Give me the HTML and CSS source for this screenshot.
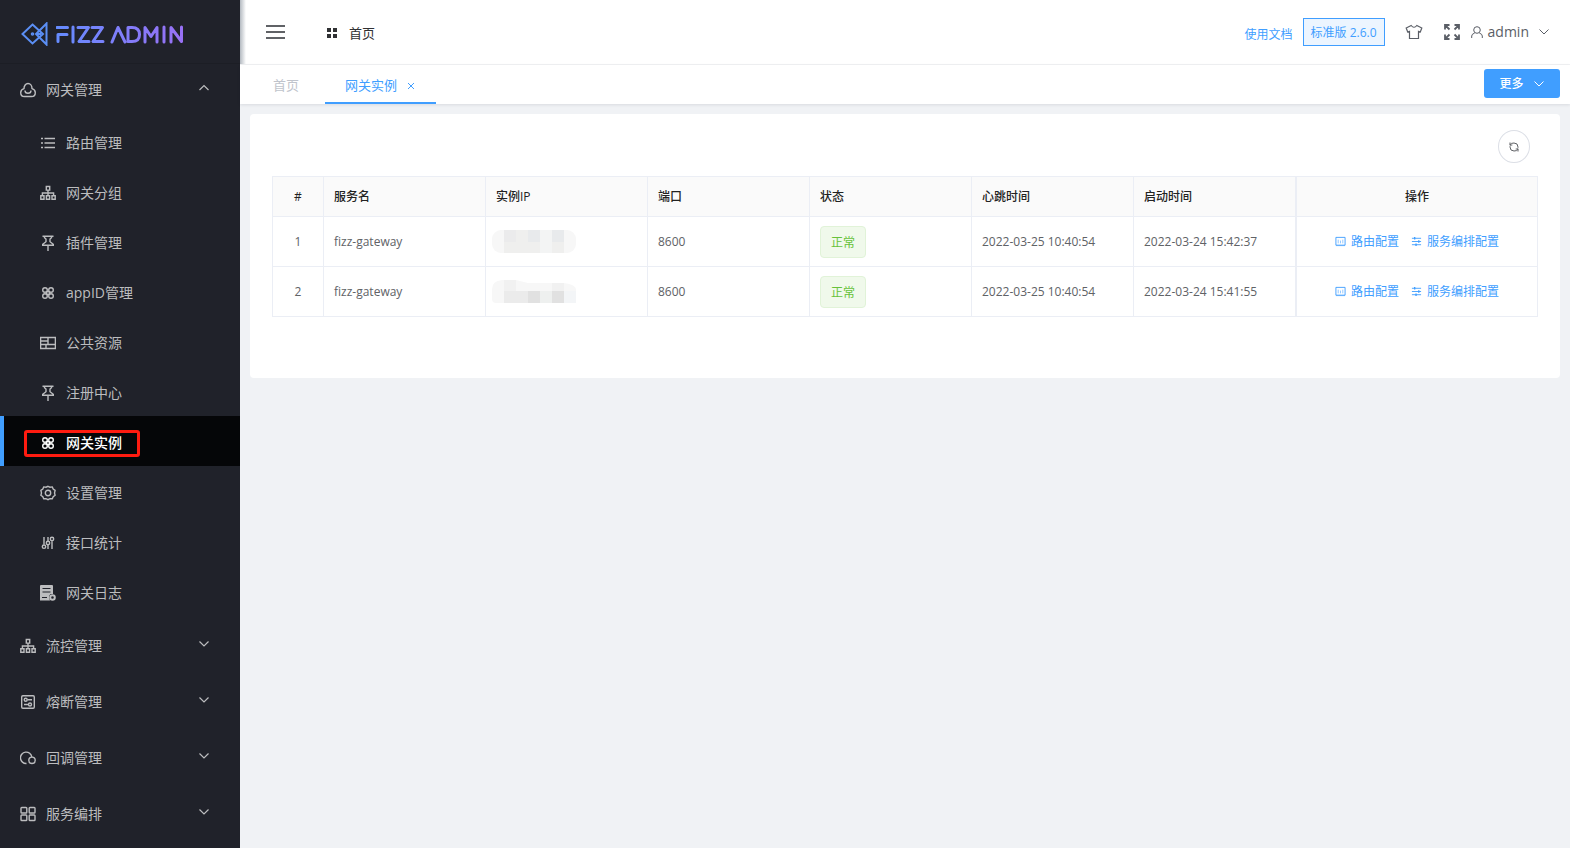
FILE: index.html
```html
<!DOCTYPE html>
<html lang="zh-CN">
<head>
<meta charset="utf-8">
<title>Fizz Admin</title>
<link rel="stylesheet" href="styles.css">
</head>
<body>
<svg class="sprite" aria-hidden="true">
  <symbol id="i-cloud" viewBox="0 0 16 16"><path d="M4 6.600C4 3.700 5.700 1.500 8 1.500s4 2.200 4 5.100c2 .6 3.300 2.100 3.300 4.100 0 2.300-1.500 3.800-3.800 3.800h-7C2.200 14.500.7 13 .7 10.700.7 8.700 2 7.200 4 6.600zM5 8.500a3 2.800 0 0 0 6 0"/></symbol>
  <symbol id="i-list" viewBox="0 0 16 16"><path d="M4.500 3.500H15M4.500 8H15M4.500 12.500H15M1 3.500h2M1 8h2M1 12.500h2"/></symbol>
  <symbol id="i-tree" viewBox="0 0 16 16"><path d="M6.300 1.500h3.400v3.600H6.300zM8 5.100v5.400M2.400 10.500V8h11.200v2.500M.8 10.700h3.200v3.500H.8zM6.400 10.700h3.200v3.500H6.400zM12 10.700h3.200v3.500H12z"/></symbol>
  <symbol id="i-pin" viewBox="0 0 16 16"><path d="M2.500 1.200h11M4.500 1.500v1.200L6 4v2.700L2.700 9.300v.9h10.600v-.9L10 6.700V4l1.500-1.300V1.500M8 10.200V16"/></symbol>
  <symbol id="i-clover" viewBox="0 0 16 16"><path d="M6.600 6.600h2.800v2.800H6.600z"/><circle cx="5" cy="5" r="2.300"/><circle cx="11" cy="5" r="2.300"/><circle cx="5" cy="11" r="2.300"/><circle cx="11" cy="11" r="2.300"/></symbol>
  <symbol id="i-grid" viewBox="0 0 16 16"><path d="M.6 2.500h14.800v11H.6zM8 2.500v7M.6 6h7.400M.6 9.500h14.800M6 9.500v4"/></symbol>
  <symbol id="i-gear" viewBox="0 0 16 16"><path d="M8 1.300l2 .9 2.300-.3.9 2.100 1.900 1.400L14.500 8l.6 2.300-1.900 1.400-.9 2.100-2.300-.2-2 1-2-1-2.300.2-.9-2.100L.9 10.300 1.500 8 .9 5.400 2.800 4l.9-2.100 2.300.3z"/><circle cx="8" cy="8" r="2.700"/></symbol>
  <symbol id="i-sliders" viewBox="0 0 16 16"><path d="M4 2v7.500M8 2v4M8 10v4M12 6.200V14"/><circle cx="4" cy="11.700" r="1.700"/><circle cx="8" cy="8" r="1.700"/><circle cx="12" cy="4" r="1.700"/></symbol>
  <symbol id="i-log" viewBox="0 0 16 16"><path fill="currentColor" stroke="none" fill-rule="evenodd" d="M0 1q0-1 1-1h11q1 0 1 1v8h-2.500L9 11v2l1 2.500H0zM2.500 3v1h8V3zM2.500 6.500v1h8v-1zM2 12v1h5v-1z"/><circle cx="12.500" cy="12.500" r="2.300" stroke-width="2"/></symbol>
  <symbol id="i-breaker" viewBox="0 0 16 16"><rect x="1.700" y="1.700" width="12.600" height="12.600" rx="1.200"/><circle cx="5.700" cy="5.700" r="1.500"/><circle cx="10" cy="10.500" r="1.500"/><path d="M7.500 5.700H12M4 10.500h4.500"/></symbol>
  <symbol id="i-rings" viewBox="0 0 16 16"><path d="M6.500 13.500A5.700 5.700 0 1 1 11.800 7"/><circle cx="12" cy="10.300" r="3.200"/></symbol>
  <symbol id="i-apps" viewBox="0 0 16 16"><rect x="1" y="1.500" width="5.800" height="5.500" rx=".8"/><rect x="9.200" y="1.500" width="5.800" height="5.500" rx=".8"/><rect x="1" y="9" width="5.800" height="5.500" rx=".8"/><rect x="9.200" y="9" width="5.800" height="5.500" rx=".8"/></symbol>
  <symbol id="i-down" viewBox="0 0 12 12"><path d="M1.500 3.500L6 8l4.500-4.500"/></symbol>
  <symbol id="i-up" viewBox="0 0 12 12"><path d="M1.500 8L6 3.500 10.500 8"/></symbol>
  <symbol id="i-board" viewBox="0 0 12 12"><path d="M1 1.500h10v8.500H1z"/><path d="M1 10.500h10M3.500 4v4M6 5v3M8.500 4v4" opacity=".6"/></symbol>
  <symbol id="i-tune" viewBox="0 0 12 12"><path d="M1 2.500h10M1 6h10M1 9.500h10"/><path d="M4 1.200v2.600M8.500 4.700v2.600M5.500 8.200v2.600" stroke-width="1.500"/></symbol>
</svg>
<div class="app">
  <aside class="sidebar">
    <a class="logo" href="#" aria-label="FIZZ ADMIN">
      <svg class="logo-mark" viewBox="0 0 28 24" aria-hidden="true"><path d="M11.500 2.500L22 12 11.500 21.500 1.500 12zM25.500 1.500v21L15 12zM15 12h5"/><circle cx="11.500" cy="12" r=".8"/></svg>
      <svg class="logo-word" viewBox="0 0 130 24" aria-hidden="true">
        <defs><linearGradient id="lg" gradientUnits="userSpaceOnUse" x1="0" y1="0" x2="130" y2="0"><stop offset="0" stop-color="#658cff"/><stop offset="1" stop-color="#9a70f5"/></linearGradient></defs>
        <path stroke="url(#lg)" d="M1 5.500h10.500M2 19.500V12.500h9M17 5v15M22 5.500h10.500L23 19.500h10M36 5.500h10.500L37 19.500h10M56 20l6-14.500L69 20M72 5.500v14h4q7.500 0 7.500-7t-7.500-7zM89 20V5.500l6 9 6-9V20M108 5v15M115 20V5.500l10.500 14V5"/>
      </svg>
    </a>
    <nav class="menu">
      <button class="item top" type="button"><svg class="ico"><use href="#i-cloud"/></svg><span>网关管理</span><svg class="arrow"><use href="#i-up"/></svg></button>
      <a class="item sub" href="#"><svg class="ico"><use href="#i-list"/></svg><span>路由管理</span></a>
      <a class="item sub" href="#"><svg class="ico"><use href="#i-tree"/></svg><span>网关分组</span></a>
      <a class="item sub" href="#"><svg class="ico"><use href="#i-pin"/></svg><span>插件管理</span></a>
      <a class="item sub" href="#"><svg class="ico"><use href="#i-clover"/></svg><span>appID管理</span></a>
      <a class="item sub" href="#"><svg class="ico"><use href="#i-grid"/></svg><span>公共资源</span></a>
      <a class="item sub" href="#"><svg class="ico"><use href="#i-pin"/></svg><span>注册中心</span></a>
      <a class="item sub active" href="#" aria-current="page"><svg class="ico"><use href="#i-clover"/></svg><span>网关实例</span></a>
      <a class="item sub" href="#"><svg class="ico"><use href="#i-gear"/></svg><span>设置管理</span></a>
      <a class="item sub" href="#"><svg class="ico"><use href="#i-sliders"/></svg><span>接口统计</span></a>
      <a class="item sub" href="#"><svg class="ico"><use href="#i-log"/></svg><span>网关日志</span></a>
      <button class="item top" type="button"><svg class="ico"><use href="#i-tree"/></svg><span>流控管理</span><svg class="arrow"><use href="#i-down"/></svg></button>
      <button class="item top" type="button"><svg class="ico"><use href="#i-breaker"/></svg><span>熔断管理</span><svg class="arrow"><use href="#i-down"/></svg></button>
      <button class="item top" type="button"><svg class="ico"><use href="#i-rings"/></svg><span>回调管理</span><svg class="arrow"><use href="#i-down"/></svg></button>
      <button class="item top" type="button"><svg class="ico"><use href="#i-apps"/></svg><span>服务编排</span><svg class="arrow"><use href="#i-down"/></svg></button>
    </nav>
  </aside>
  <div class="main">
    <header class="header">
      <button class="plain burger" type="button" aria-label="折叠菜单"><svg viewBox="0 0 20 16"><path d="M0 2h19M0 8h19M0 14h19"/></svg></button>
      <a class="crumb" href="#"><svg viewBox="0 0 12 12"><path d="M1 1h4v4H1zM7 1h4v4H7zM1 7h4v4H1zM7 7h4v4H7z"/></svg><span>首页</span></a>
      <div class="tools">
        <a class="doc" href="#">使用文档</a>
        <span class="version">标准版 2.6.0</span>
        <button class="plain shirt" type="button" aria-label="主题"><svg viewBox="0 0 18 16"><path d="M6.200 1.500L1.200 4l1.500 4 1.800-.6V14.500h9V7.400l1.800.6 1.500-4-5-2.500Q9 5 6.200 1.500z"/></svg></button>
        <button class="plain full" type="button" aria-label="全屏"><svg viewBox="0 0 18 18"><path d="M2 6.500V2h4.500M2 2l4.500 4.500M11.500 2H16v4.500M16 2l-4.500 4.500M2 11.500V16h4.500M2 16l4.500-4.500M16 11.500V16h-4.500M16 16l-4.500-4.500"/></svg></button>
        <button class="plain user" type="button"><svg class="person" viewBox="0 0 12 12"><circle cx="6" cy="4" r="3.300"/><path d="M.7 12V10q0-2 3-3M11.300 12V10q0-2-3-3"/></svg><span>admin</span><svg class="caret"><use href="#i-down"/></svg></button>
      </div>
    </header>
    <div class="tabs">
      <a class="tab" href="#">首页</a>
      <div class="tab current"><a href="#">网关实例</a><button class="plain close" type="button" aria-label="关闭"><svg viewBox="0 0 8 8"><path d="M1 1l6 6M7 1L1 7"/></svg></button></div>
      <button class="more" type="button"><span>更多</span><svg><use href="#i-down"/></svg></button>
    </div>
    <main class="content">
      <section class="card">
        <div class="card-tools"><button class="refresh" type="button" aria-label="刷新"><svg viewBox="0 0 12 12"><path d="M2.200 4.500V3.500Q3 2 6 2q4 0 4 4v.8M9.800 7.500v1Q9 10 6 10 2 10 2 6v-.8M2 1.500v2.500h2.300M10 10.500V8H7.700"/></svg></button></div>
        <table class="grid">
          <colgroup><col class="c-num"><col><col><col><col><col><col><col class="c-op"></colgroup>
          <thead><tr><th class="mid">#</th><th>服务名</th><th>实例IP</th><th>端口</th><th>状态</th><th>心跳时间</th><th>启动时间</th><th class="mid op">操作</th></tr></thead>
          <tbody>
            <tr><td class="mid">1</td><td>fizz-gateway</td>
              <td class="ip"><svg class="mosaic" viewBox="0 0 84 24"><clipPath id="m1"><rect y="0" width="84" height="23" rx="9"/></clipPath><g clip-path="url(#m1)"><path fill="#f7f7f7" d="M0 0h84v24H0z"/><path fill="#ebebec" d="M12 0h12v12H12z"/><path fill="#efefee" d="M12 12h24v12H12zM24 0h12v12H24zM36 12h12v12H36zM60 12h12v12H60z"/><path fill="#e8eaec" d="M36 0h12v12H36zM60 0h12v12H60z"/><path fill="#f3f4f4" d="M48 0h12v24H48z"/></g></svg></td>
              <td>8600</td><td><span class="tag">正常</span></td><td>2022-03-25 10:40:54</td><td>2022-03-24 15:42:37</td>
              <td class="op"><div class="actions"><a href="#"><svg><use href="#i-board"/></svg>路由配置</a><a href="#"><svg><use href="#i-tune"/></svg>服务编排配置</a></div></td></tr>
            <tr><td class="mid">2</td><td>fizz-gateway</td>
              <td class="ip"><svg class="mosaic" viewBox="0 0 84 24"><clipPath id="m2"><path d="M0 9Q0 1 10 0h14l12 3h34q14 1 14 7v13H4q-4 0-4-4z"/></clipPath><g clip-path="url(#m2)"><path fill="#f7f7f7" d="M0 0h84v24H0z"/><path fill="#f1f1f1" d="M12 0h12v11H12zM60 0h12v11H60z"/><path fill="#ebebeb" d="M12 11h24v13H12z"/><path fill="#e1e1e1" d="M36 11h12v13H36zM60 11h12v13H60z"/><path fill="#eef0ef" d="M48 11h12v13H48z"/><path fill="#f3f5f7" d="M72 11h12v13H72z"/></g></svg></td>
              <td>8600</td><td><span class="tag">正常</span></td><td>2022-03-25 10:40:54</td><td>2022-03-24 15:41:55</td>
              <td class="op"><div class="actions"><a href="#"><svg><use href="#i-board"/></svg>路由配置</a><a href="#"><svg><use href="#i-tune"/></svg>服务编排配置</a></div></td></tr>
          </tbody>
        </table>
      </section>
    </main>
  </div>
</div>
</body>
</html>
```
FILE: styles.css
```css
*, *::before, *::after { box-sizing: border-box; }
body { margin: 0; background: #f0f2f5; color: #606266; font: 12px/20px "Open Sans", "Noto Sans CJK SC", sans-serif; }
a { color: inherit; text-decoration: none; }
button { font: inherit; color: inherit; cursor: pointer; }
svg { display: block; flex: none; fill: none; stroke: currentColor; stroke-width: 1; }
.sprite { position: absolute; width: 0; height: 0; }
.app { display: flex; min-height: 100vh; }

.sidebar { flex: 0 0 240px; background: #20222a; color: #bcbdbf; }
.logo { display: flex; align-items: center; gap: 7px; height: 64px; padding: 4px 0 0 21px; border-bottom: 1px solid #1c1e25; }
.logo-mark { width: 28px; height: 24px; color: #5b8ff5; stroke-width: 2; }
.logo-word { width: 130px; height: 24px; stroke-width: 3; stroke-linecap: round; stroke-linejoin: round; }
.menu { margin-top: -4px; }
.item { position: relative; display: flex; align-items: center; gap: 10px; width: 100%; padding: 4px 30px 0 20px; border: 0; background: none; font-size: 14px; text-align: left; }
.top { height: 56px; }
.sub { height: 50px; padding-left: 40px; }
.ico { width: 16px; height: 16px; stroke-width: 1.4; }
.arrow { width: 12px; height: 12px; margin: 0 0 4px auto; stroke-width: 1.2; }
.active { background: #050608; color: #fff; font-weight: 500; }
.active::before { content: ""; position: absolute; inset: 0 auto 0 0; width: 4px; background: #409eff; }
.active::after { content: ""; position: absolute; left: 24px; top: 14px; width: 116px; height: 27px; border: 3px solid #fe1b10; border-radius: 3px; }

.main { flex: 1; min-width: 0; }
.header { display: flex; align-items: center; height: 65px; padding: 0 20px 0 26px; background: #fff linear-gradient(90deg, #b4bac1, #fff) no-repeat; background-size: 6px 100%; border-bottom: 1px solid #f1f2f4; }
.plain { display: flex; align-items: center; padding: 0; border: 0; background: none; }
.burger svg { width: 20px; height: 16px; stroke-width: 2; color: #606266; }
.crumb { display: flex; align-items: center; gap: 11px; margin-left: 40px; padding-top: 2px; color: #303133; font-size: 13px; }
.crumb svg { width: 12px; height: 12px; fill: currentColor; stroke: none; }
.tools { display: flex; align-items: center; margin-left: auto; color: #5a5e66; }
.doc { padding-top: 5px; color: #409eff; }
.version { height: 28px; margin: 0 20px 0 10px; padding: 0 7px; border: 1px solid #409eff; background: #ecf5ff; color: #409eff; line-height: 28px; }
.shirt svg { width: 18px; height: 16px; stroke-width: 1.2; }
.full { margin: 0 10px 0 20px; }
.full svg { width: 18px; height: 18px; stroke-width: 1.8; }
.user { font-size: 14px; }
.person { width: 12px; height: 12px; margin-right: 5px; }
.caret { width: 12px; height: 12px; margin-left: 9px; }

.tabs { display: flex; height: 39px; padding-right: 10px; background: #fff; box-shadow: 0 1px 3px rgba(0, 21, 41, .1); font-size: 13px; }
.tab { display: flex; align-items: center; padding: 0 26px 0 33px; color: #c0c4cc; }
.current { gap: 10px; padding: 2px 21px 0 20px; border-bottom: 2px solid #409eff; color: #409eff; }
.close { padding-top: 3px; }
.close svg { width: 8px; height: 8px; }
.more { display: flex; align-items: center; justify-content: center; gap: 9px; width: 76px; height: 29px; margin: 4px 0 0 auto; padding: 0; border: 0; border-radius: 3px; background: #409eff; color: #fff; font-size: 12px; font-weight: 500; }
.more svg { width: 12px; height: 12px; }

.content { padding: 10px; }
.card { padding: 16px 22px 61px; border-radius: 4px; background: #fff; }
.card-tools { display: flex; justify-content: flex-end; padding: 0 8px 13px 0; }
.refresh { display: grid; place-items: center; width: 32px; height: 33px; padding: 0; border: 1px solid #dcdfe6; border-radius: 50%; background: #fff; }
.refresh svg { width: 12px; height: 12px; }
.grid { width: 100%; table-layout: fixed; border-collapse: separate; border-spacing: 0; border: 1px solid #ebeef5; border-width: 1px 0 0 1px; }
.c-num { width: 51px; }
.c-op { width: 242px; }
.grid th, .grid td { height: 50px; padding: 0 10px; border: 1px solid #ebeef5; border-width: 0 1px 1px 0; text-align: left; }
.grid th { height: 40px; background: #fafafa; color: #222; font-weight: 500; }
.grid .mid { text-align: center; }
.grid .op { border-left-width: 1px; }
.grid .ip { padding-left: 6px; }
.mosaic { width: 84px; height: 24px; stroke: none; }
.tag { display: block; width: 46px; height: 32px; border: 1px solid #e1f3d8; border-radius: 4px; background: #f0f9eb; color: #67c23a; line-height: 32px; text-align: center; }
.actions { display: flex; justify-content: center; gap: 12px; color: #409eff; }
.actions a { display: flex; align-items: center; gap: 5px; }
.actions svg { width: 11px; height: 11px; }
```
